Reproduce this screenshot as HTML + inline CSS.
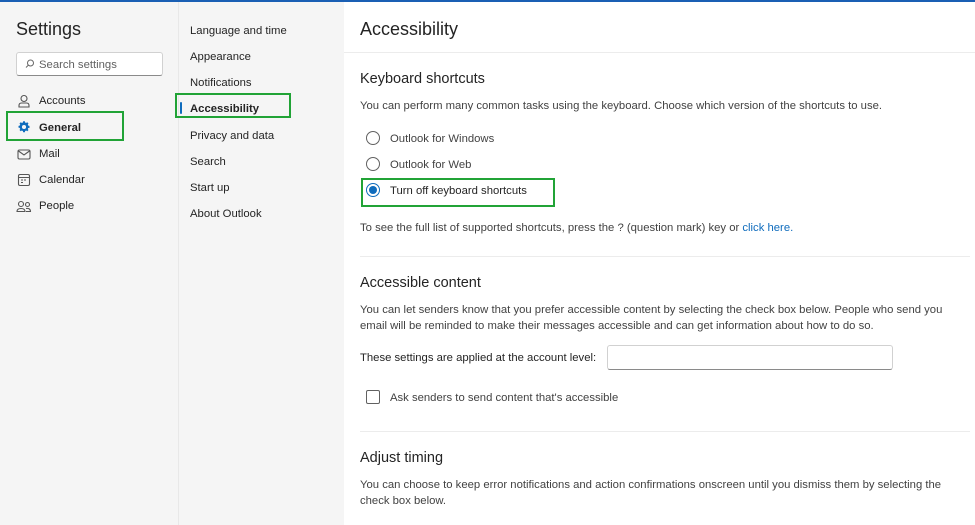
<!DOCTYPE html>
<html><head><style>
*{margin:0;padding:0;box-sizing:border-box}
body{width:975px;height:525px;overflow:hidden;background:#fff;font-family:"Liberation Sans",sans-serif;color:#242424;position:relative}
.a{position:absolute;white-space:nowrap}
.s{font-size:11.3px;line-height:14px}
.g{color:#424242}
.box{position:absolute;border:2px solid #21a336}
</style></head><body>
<div class="a" style="left:0;top:0;width:975px;height:2px;background:#1a5fb4"></div>
<div class="a" style="left:0;top:2px;width:178px;height:523px;background:#f5f5f5"></div>
<div class="a" style="left:178px;top:2px;width:166px;height:523px;background:#f5f5f5;border-left:1px solid #e8e8e8"></div>
<div class="a" style="left:16px;top:18px;font-size:18px;line-height:22px;color:#242424">Settings</div>
<div class="a" style="left:16px;top:52px;width:147px;height:24px;background:#fff;border:1px solid #d1d1d1;border-bottom:1px solid #8a8a8a;border-radius:3px"></div>
<svg class="a" style="left:25px;top:59px" width="10" height="10" viewBox="0 0 10 10"><circle cx="5.5" cy="4" r="3" fill="none" stroke="#666" stroke-width="1"/><path d="M3.3 6.2L1 8.5" stroke="#666" stroke-width="1"/></svg>
<div class="a s" style="left:39px;top:58px;color:#616161">Search settings</div>
<svg class="a" style="left:17px;top:94px" width="14" height="14" viewBox="0 0 14 14" fill="none" stroke="#555" stroke-width="1.1"><circle cx="7" cy="4.5" r="3"/><path d="M2 13v-1.5c0-1.5 1-2.5 2.5-2.5h5c1.5 0 2.5 1 2.5 2.5V13z"/></svg>
<div class="a s" style="left:39px;top:94px">Accounts</div>
<svg class="a" style="left:17px;top:120px" width="14" height="14" viewBox="0 0 24 24"><path fill="#0f6cbd" d="M12 8.5a3.5 3.5 0 1 0 0 7 3.5 3.5 0 0 0 0-7zm9.4 5.4l-2.1-.4a7.6 7.6 0 0 1-.8 1.9l1.2 1.8-2.1 2.1-1.8-1.2c-.6.4-1.2.6-1.900.8l-.4 2.1h-3l-.4-2.1a7.6 7.6 0 0 1-1.9-.8l-1.8 1.2-2.1-2.1 1.2-1.8c-.4-.6-.6-1.2-.8-1.9l-2.1-.4v-3l2.1-.4c.2-.7.4-1.300.8-1.9L4.3 5.9l2.1-2.1 1.8 1.2c.6-.4 1.2-.6 1.9-.8l.4-2.1h3l.4 2.1c.7.2 1.3.4 1.9.8l1.8-1.2 2.1 2.1-1.2 1.8c.4.6.6 1.2.8 1.9l2.1.4z"/></svg>
<div class="a s" style="left:39px;top:121px;font-weight:bold">General</div>
<div class="box" style="left:6px;top:111px;width:118px;height:30px"></div>
<svg class="a" style="left:17px;top:147px" width="14" height="14" viewBox="0 0 14 14" fill="none" stroke="#555" stroke-width="1.1"><rect x="1" y="3" width="12" height="9" rx="1.5"/><path d="M1.5 4l5.5 4 5.5-4"/></svg>
<div class="a s" style="left:39px;top:147px">Mail</div>
<svg class="a" style="left:17px;top:173px" width="14" height="14" viewBox="0 0 14 14" fill="none" stroke="#555" stroke-width="1.1"><rect x="1.5" y="1.5" width="11" height="11" rx="1.5"/><path d="M1.5 4.5h11M4 7h2M7 7h2M4 9.5h2"/></svg>
<div class="a s" style="left:39px;top:173px">Calendar</div>
<svg class="a" style="left:16px;top:199px" width="16" height="14" viewBox="0 0 16 14" fill="none" stroke="#555" stroke-width="1.1"><circle cx="5" cy="5" r="2.5"/><circle cx="11.5" cy="5.5" r="2"/><path d="M1 12.5c0-2 1.5-3 4-3s4 1 4 3zM10 9.5c2.5-.5 4.5.5 4.5 3H10"/></svg>
<div class="a s" style="left:39px;top:199px">People</div>

<div class="a s" style="left:190px;top:24px">Language and time</div>
<div class="a s" style="left:190px;top:50px">Appearance</div>
<div class="a s" style="left:190px;top:76px">Notifications</div>
<div class="a" style="left:180px;top:102px;width:2px;height:12px;background:#0f6cbd;border-radius:1px"></div>
<div class="a s" style="left:190px;top:102px;font-weight:bold">Accessibility</div>
<div class="box" style="left:175px;top:93px;width:116px;height:25px"></div>
<div class="a s" style="left:190px;top:129px">Privacy and data</div>
<div class="a s" style="left:190px;top:155px">Search</div>
<div class="a s" style="left:190px;top:181px">Start up</div>
<div class="a s" style="left:190px;top:207px">About Outlook</div>

<div class="a" style="left:360px;top:18px;font-size:18px;line-height:22px">Accessibility</div>
<div class="a" style="left:344px;top:52px;width:631px;height:1px;background:#ececec"></div>
<div class="a" style="left:360px;top:70px;font-size:14.5px;line-height:18px">Keyboard shortcuts</div>
<div class="a s g" style="left:360px;top:99px">You can perform many common tasks using the keyboard. Choose which version of the shortcuts to use.</div>
<div class="a" style="left:366px;top:131px;width:14px;height:14px;border:1px solid #616161;border-radius:50%"></div>
<div class="a s g" style="left:390px;top:132px">Outlook for Windows</div>
<div class="a" style="left:366px;top:157px;width:14px;height:14px;border:1px solid #616161;border-radius:50%"></div>
<div class="a s g" style="left:390px;top:158px">Outlook for Web</div>
<div class="a" style="left:366px;top:183px;width:14px;height:14px;border:1px solid #0f6cbd;border-radius:50%"></div>
<div class="a" style="left:369px;top:186px;width:8px;height:8px;background:#0f6cbd;border-radius:50%"></div>
<div class="a s" style="left:390px;top:184px">Turn off keyboard shortcuts</div>
<div class="box" style="left:361px;top:178px;width:194px;height:29px"></div>
<div class="a s g" style="left:360px;top:221px">To see the full list of supported shortcuts, press the ? (question mark) key or <span style="color:#0f6cbd">click here.</span></div>
<div class="a" style="left:360px;top:256px;width:610px;height:1px;background:#ececec"></div>
<div class="a" style="left:360px;top:274px;font-size:14.5px;line-height:18px">Accessible content</div>
<div class="a s g" style="left:360px;top:303px;line-height:15.5px">You can let senders know that you prefer accessible content by selecting the check box below. People who send you<br>email will be reminded to make their messages accessible and can get information about how to do so.</div>
<div class="a s" style="left:360px;top:351px">These settings are applied at the account level:</div>
<div class="a" style="left:607px;top:345px;width:286px;height:25px;border:1px solid #d1d1d1;border-bottom-color:#8a8a8a;border-radius:3px"></div>
<div class="a" style="left:366px;top:390px;width:14px;height:14px;border:1px solid #616161;border-radius:2px"></div>
<div class="a s g" style="left:390px;top:391px">Ask senders to send content that's accessible</div>
<div class="a" style="left:360px;top:431px;width:610px;height:1px;background:#ececec"></div>
<div class="a" style="left:360px;top:449px;font-size:14.5px;line-height:18px">Adjust timing</div>
<div class="a s g" style="left:360px;top:478px;line-height:15.5px">You can choose to keep error notifications and action confirmations onscreen until you dismiss them by selecting the<br>check box below.</div>
</body></html>
